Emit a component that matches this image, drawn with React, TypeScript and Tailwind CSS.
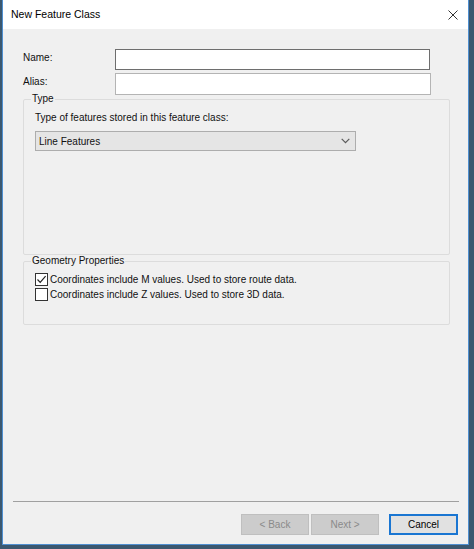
import React from 'react';

function Checkbox({ checked }: { checked: boolean }) {
  return (
    <span className="w-[13px] h-[13px] border border-[#333333] bg-white flex items-center justify-center shrink-0">
      {checked && (
        <svg width="11" height="11" viewBox="0 0 11 11" fill="none">
          <path d="M1.5 5.5 L4.2 8.3 L9.6 2.2" stroke="#222222" strokeWidth="1.2" />
        </svg>
      )}
    </span>
  );
}

export default function App() {
  return (
    <div
      className="w-[474px] h-[549px] bg-[#3b5870] overflow-hidden text-[10px] text-[#111111]"
      style={{ fontFamily: '"Liberation Sans", Arial, sans-serif' }}
    >
      <div className="ml-[2px] w-[467px] h-[545px] border-x border-b border-[#4f8fd0] flex flex-col bg-[#f0f0f0]">
        {/* Title bar */}
        <div className="h-[29px] bg-white flex items-center justify-between pl-[8px] pr-[9px] shrink-0">
          <span className="text-[10.5px] text-black">New Feature Class</span>
          <svg width="10" height="10" viewBox="0 0 10 10" className="mr-[1px]">
            <path d="M0.5 0.5 L9.5 9.5 M9.5 0.5 L0.5 9.5" stroke="#333333" strokeWidth="1" />
          </svg>
        </div>

        {/* Body */}
        <div className="flex-1 flex flex-col pt-[20px]">
          <div className="pl-[20px] flex flex-col gap-[3px]">
            <div className="flex items-center h-[21px]">
              <span className="w-[92px] -mt-[4px]">Name:</span>
              <div className="w-[315px] h-[21px] bg-white border border-[#6e6e6e]" />
            </div>
            <div className="flex items-center h-[21px]">
              <span className="w-[92px] -mt-[5px]">Alias:</span>
              <div className="w-[316px] h-[22px] bg-white border border-[#b4b4b4]" />
            </div>
          </div>

          <div className="pl-[20px]">
            {/* Type group */}
            <fieldset className="w-[427px] h-[162px] border border-[#dcdcdc] rounded-[2px] px-[8px] -mt-[1px]">
              <legend className="leading-[12px] px-[1px] -ml-[1px]">Type</legend>
              <div className="pl-[3px] pt-[7px]">
                <div className="leading-[12px]">Type of features stored in this feature class:</div>
                <div className="mt-[7px] w-[321px] h-[20px] bg-[#e5e5e5] border border-[#adadad] flex items-center justify-between pl-[3px] pr-[5px]">
                  <span>Line Features</span>
                  <svg width="9" height="6" viewBox="0 0 9 6" fill="none">
                    <path d="M0.7 0.8 L4.5 4.6 L8.3 0.8" stroke="#5a5a5a" strokeWidth="1.2" />
                  </svg>
                </div>
              </div>
            </fieldset>

            {/* Geometry group */}
            <fieldset className="w-[427px] h-[70px] border border-[#dcdcdc] rounded-[2px] px-[8px]">
              <legend className="leading-[12px] px-[1px] -ml-[1px]">Geometry Properties</legend>
              <div className="pl-[3px] pt-[6px] flex flex-col gap-[2px]">
                <label className="flex items-center gap-[2px] h-[13px]">
                  <Checkbox checked={true} />
                  <span>Coordinates include M values. Used to store route data.</span>
                </label>
                <label className="flex items-center gap-[2px] h-[13px]">
                  <Checkbox checked={false} />
                  <span>Coordinates include Z values. Used to store 3D data.</span>
                </label>
              </div>
            </fieldset>
          </div>

          {/* Footer */}
          <div className="mt-auto pb-[9px]">
            <div className="ml-[10px] w-[446px] h-px bg-[#a0a0a0]" />
            <div className="flex justify-end pr-[10px] pt-[12px]">
              <div className="flex gap-[2px]">
                <button className="w-[68px] h-[21px] bg-[#cccccc] border border-[#bfbfbf] text-[#8a8a8a]">
                  &lt; Back
                </button>
                <button className="w-[68px] h-[21px] bg-[#cccccc] border border-[#bfbfbf] text-[#8a8a8a]">
                  Next &gt;
                </button>
              </div>
              <button className="ml-[10px] w-[69px] h-[21px] bg-[#e1e1e1] border-2 border-[#1a76d2] text-black">
                Cancel
              </button>
            </div>
          </div>
        </div>
      </div>
    </div>
  );
}
